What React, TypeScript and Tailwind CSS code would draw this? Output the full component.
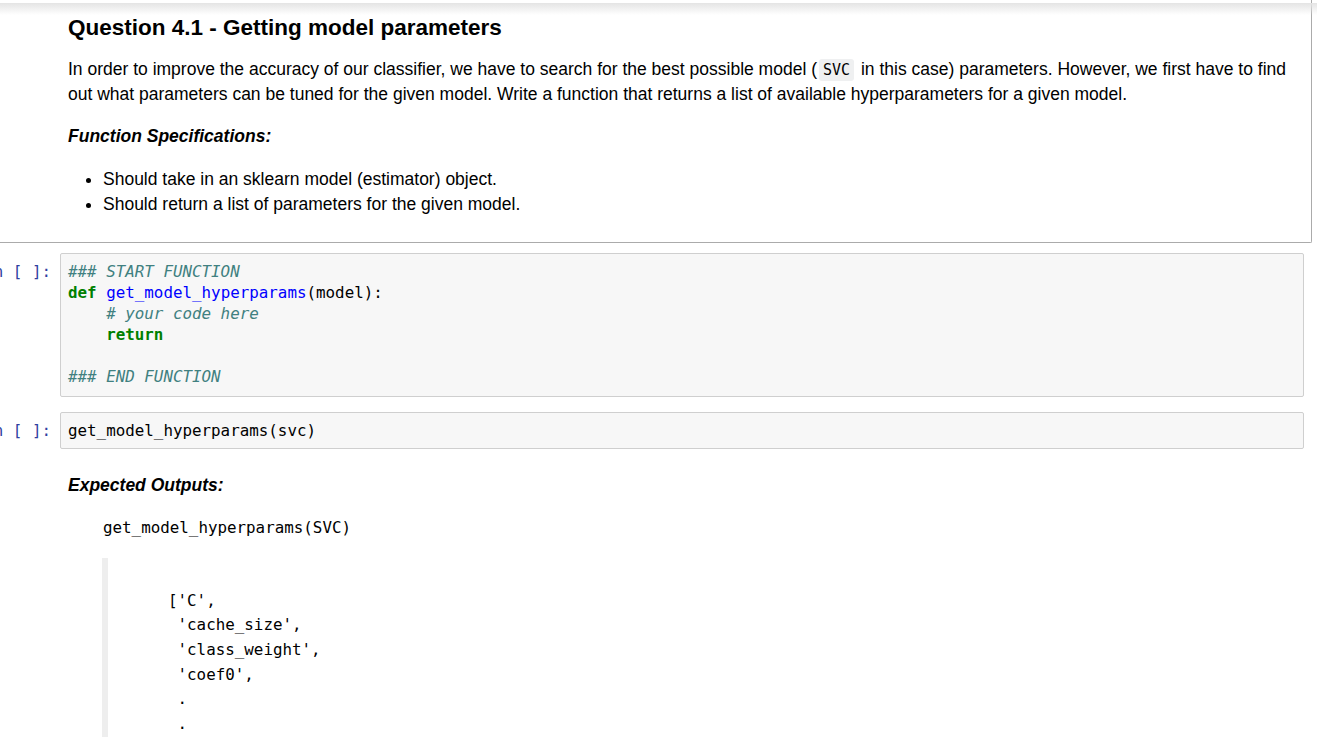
import React from 'react';

const mono = "font-['DejaVu_Sans_Mono',monospace]";

function Prompt({ top }: { top: string }) {
  return (
    <div className={`w-[60px] shrink-0 flex justify-end pr-[9px] ${top} text-[#303f9f] text-[15.85px] leading-[21.1px] ${mono}`}>
      <span className="shrink-0 whitespace-pre">In [ ]:</span>
    </div>
  );
}

export default function App() {
  const outputLines = ["['C',", " 'cache_size',", " 'class_weight',", " 'coef0',", ' .', ' .', ' .'];

  return (
    <div className="relative h-[737px] overflow-hidden bg-white text-black font-['Liberation_Sans',Arial,sans-serif]">
      {/* toolbar shadow */}
      <div className="pointer-events-none absolute inset-x-0 top-[3px] h-[12px] bg-linear-to-b from-[#e4e4e4] to-white/0" />

      {/* selected markdown cell */}
      <div className="w-[1312px] border-r border-b border-[#ababab] rounded-br-[2px] pl-[68px] pr-[14px] pt-[14px] pb-[26px]">
        <h2 className="text-[22.5px] font-bold leading-[27px]">Question 4.1 - Getting model parameters</h2>
        <p className="mt-[15.5px] text-[17.5px] leading-[24.5px]">
          In order to improve the accuracy of our classifier, we have to search for the best possible model (
          <code className={`mx-[2px] px-[4px] py-[2px] rounded-[3px] bg-[#eff0f1] text-[15px] ${mono}`}>SVC</code> in
          this case) parameters. However, we first have to find out what parameters can be tuned for the given model.
          Write a function that returns a list of available hyperparameters for a given model.
        </p>
        <p className="mt-[17px] text-[17.5px] leading-[24.5px] font-bold italic">Function Specifications:</p>
        <ul className="mt-[19px] list-disc pl-[35px] text-[17.5px] leading-[24.5px]">
          <li>Should take in an sklearn model (estimator) object.</li>
          <li>Should return a list of parameters for the given model.</li>
        </ul>
      </div>

      {/* code cell 1 */}
      <div className="mt-[10px] flex w-[1312px] pr-[8px]">
        <Prompt top="pt-[8px]" />
        <div className={`flex-1 bg-[#f7f7f7] border border-[#cfcfcf] rounded-[2px] pl-[7px] pt-[7px] pb-[8px] text-[15.85px] leading-[21.1px] text-black ${mono}`}>
          <div className="whitespace-pre italic text-[#408080]">### START FUNCTION</div>
          <div className="whitespace-pre">
            <span className="font-bold text-[#008000]">def</span> <span className="text-[#0000ff]">get_model_hyperparams</span>(model):
          </div>
          <div className="whitespace-pre">
            {'    '}<span className="italic text-[#408080]"># your code here</span>
          </div>
          <div className="whitespace-pre">
            {'    '}<span className="font-bold text-[#008000]">return</span>
          </div>
          <div className="h-[21.1px]" />
          <div className="whitespace-pre italic text-[#408080]">### END FUNCTION</div>
        </div>
      </div>

      {/* code cell 2 */}
      <div className="mt-[15px] flex w-[1312px] pr-[8px]">
        <Prompt top="pt-[8px]" />
        <div className={`flex-1 bg-[#f7f7f7] border border-[#cfcfcf] rounded-[2px] pl-[7px] py-[7px] text-[15.85px] leading-[21.1px] text-black ${mono}`}>
          <div className="whitespace-pre">get_model_hyperparams(svc)</div>
        </div>
      </div>

      {/* expected outputs markdown */}
      <div className="mt-[24px] pl-[68px]">
        <p className="text-[17.5px] leading-[24.5px] font-bold italic">Expected Outputs:</p>
        <div className={`mt-[20px] ml-[35px] whitespace-pre text-[15.85px] leading-[21.1px] ${mono}`}>get_model_hyperparams(SVC)</div>
        <div className={`mt-[20px] ml-[34px] border-l-[6px] border-[#eeeeee] pl-[60px] pt-[30.5px] text-[15.85px] leading-[24.6px] ${mono}`}>
          {outputLines.map((l, i) => (
            <div key={i} className="whitespace-pre">{l}</div>
          ))}
        </div>
      </div>
    </div>
  );
}
